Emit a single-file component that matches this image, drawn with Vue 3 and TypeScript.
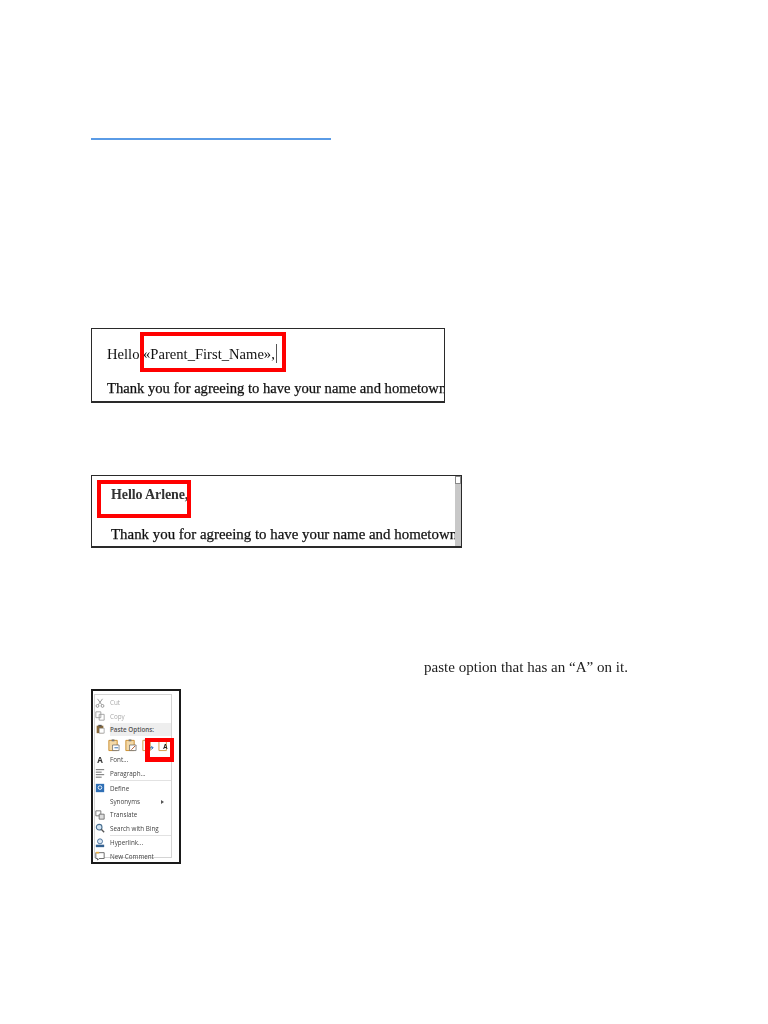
<script setup lang="ts">
interface Item { label: string; kind: string; dim?: boolean; arrow?: boolean }
const topItems: Item[] = [
  { label: 'Cut', kind: 'cut', dim: true },
  { label: 'Copy', kind: 'copy', dim: true },
]
const lowItems: Item[] = [
  { label: 'Define', kind: 'define' },
  { label: 'Synonyms', kind: 'none', arrow: true },
  { label: 'Translate', kind: 'translate' },
  { label: 'Search with Bing', kind: 'search' },
]
</script>

<template>
  <main class="page">
    <div class="rule"></div>

    <section class="shot shot-one">
      <p class="hello">Hello «Parent_First_Name»,<span class="caret"></span></p>
      <p class="body">Thank you for agreeing to have your name and hometown</p>
      <p class="body clipped">used on the website and in</p>
      <div class="mark mark-one"></div>
    </section>

    <section class="shot shot-two">
      <p class="hello arlene">Hello Arlene,</p>
      <p class="body">Thank you for agreeing to have your name and hometown</p>
      <p class="body clipped">used on the website and in</p>
      <div class="scroll"><div class="thumb"></div></div>
      <div class="mark mark-two"></div>
    </section>

    <p class="note">paste option that has an “A” on it.</p>

    <section class="menu">
      <div class="list">
        <div v-for="it in topItems" :key="it.label" class="row" :class="{ dim: it.dim }">
          <svg class="ico" viewBox="0 0 12 12">
            <path v-if="it.kind === 'cut'" d="M3 1l5 7M9 1L4 8" stroke="#888" fill="none" />
            <circle v-if="it.kind === 'cut'" cx="3" cy="9.5" r="1.7" stroke="#888" fill="none" />
            <circle v-if="it.kind === 'cut'" cx="9" cy="9.5" r="1.7" stroke="#888" fill="none" />
            <path v-if="it.kind === 'copy'" d="M1 1h6v7H1zM5 4h6v7H5z" stroke="#999" fill="#fff" />
          </svg>
          <span>{{ it.label }}</span>
        </div>

        <div class="row head">
          <svg class="ico" viewBox="0 0 12 12">
            <path d="M2 2h8v9H2z" fill="#8a6a3a" />
            <path d="M4 1h4v2H4z" fill="#555" />
            <path d="M5 5h6v6H5z" fill="#fff" stroke="#666" stroke-width=".6" />
          </svg>
          <span class="head-label">Paste Options:</span>
        </div>

        <div class="pastes">
          <svg class="paste" viewBox="0 0 14 14">
            <path d="M2 2h9v11H2z" fill="#f3d9a8" stroke="#c98a2b" />
            <path d="M5 1h3v2H5z" fill="#777" />
            <path d="M6 7h7v6H6z" fill="#fff" stroke="#555" stroke-width=".7" />
            <path d="M8 10h4" stroke="#2b6cb0" />
          </svg>
          <svg class="paste" viewBox="0 0 14 14">
            <path d="M2 2h9v11H2z" fill="#f3d9a8" stroke="#c98a2b" />
            <path d="M5 1h3v2H5z" fill="#777" />
            <path d="M6 7h7v6H6z" fill="#fff" stroke="#555" stroke-width=".7" />
            <path d="M8 12l4-4" stroke="#b0562b" />
          </svg>
          <svg class="paste" viewBox="0 0 14 14">
            <path d="M2 2h8v11H2z" fill="#fff" stroke="#d19a45" />
            <path d="M4 1h4v2H4z" fill="#777" />
            <path d="M8 10h5M11 8l2 2-2 2" stroke="#2b6cb0" fill="none" />
          </svg>
          <svg class="paste" viewBox="0 0 14 14">
            <path d="M1 2h8v11H1z" fill="#fff" stroke="#d19a45" />
            <path d="M3 1h4v2H3z" fill="#777" />
            <text x="5.5" y="11" class="paste-a">A</text>
          </svg>
        </div>

        <div class="row">
          <span class="ico letter">A</span>
          <span>Font...</span>
        </div>
        <div class="row">
          <svg class="ico" viewBox="0 0 12 12">
            <path d="M1 2h10M1 5h7M1 8h10M1 11h7" stroke="#555" fill="none" />
          </svg>
          <span>Paragraph...</span>
        </div>

        <div class="sep sep-wide"></div>

        <div v-for="it in lowItems" :key="it.label" class="row">
          <svg class="ico" viewBox="0 0 12 12">
            <g v-if="it.kind === 'define'">
              <rect x="1" y="1" width="10" height="10" fill="#2f6fb5" />
              <circle cx="6" cy="5.5" r="2.2" fill="none" stroke="#fff" />
            </g>
            <g v-if="it.kind === 'translate'">
              <path d="M1 1h6v6H1z" fill="#fff" stroke="#666" />
              <path d="M5 5h6v6H5z" fill="#ddd" stroke="#666" />
            </g>
            <g v-if="it.kind === 'search'">
              <circle cx="5" cy="5" r="3.4" fill="#d5e6f5" stroke="#4a6f8f" stroke-width="1.3" />
              <path d="M7.5 7.5l3.5 3.5" stroke="#555" stroke-width="1.6" />
            </g>
          </svg>
          <span class="grow">{{ it.label }}</span>
          <span v-if="it.arrow" class="arrow"></span>
        </div>

        <div class="sep"></div>

        <div class="row">
          <svg class="ico" viewBox="0 0 12 12">
            <circle cx="6" cy="4" r="3" fill="#dbe7f3" stroke="#33608f" />
            <path d="M1 8h10v3H1z" fill="#33608f" />
          </svg>
          <span>Hyperlink...</span>
        </div>
        <div class="row">
          <svg class="ico" viewBox="0 0 12 12">
            <path d="M1 2h10v7H5l-2 2V9H1z" fill="#fff" stroke="#555" />
            <path d="M1 1h4v2H1z" fill="#e8b04a" />
          </svg>
          <span>New Comment</span>
        </div>
      </div>
      <div class="mark mark-three"></div>
    </section>
  </main>
</template>

<style scoped>
.page {
  width: 768px;
  height: 1024px;
  box-sizing: border-box;
  padding: 138px 0 0 91px;
  background: #fff;
  overflow: hidden;
  font-family: "Liberation Serif", "Times New Roman", serif;
  color: #111;
  display: flex;
  flex-direction: column;
  align-items: flex-start;
}
p { margin: 0; white-space: nowrap; }

.rule {
  width: 240px;
  height: 2px;
  background: #5a9be6;
}

.shot {
  position: relative;
  box-sizing: border-box;
  border: 1px solid #2a2a2a;
  border-bottom-width: 2px;
  background: #fff;
  overflow: hidden;
  font-size: 14.6px;
  filter: blur(0.35px);
}
.shot-one {
  width: 354px;
  height: 75px;
  margin-top: 188px;
  padding: 15px 0 0 15px;
}
.shot-two {
  width: 371px;
  height: 73px;
  margin-top: 72px;
  padding: 10px 0 0 19px;
  font-size: 14.9px;
}
.hello { line-height: 18px; margin-bottom: 16px; }
.arlene { font-weight: 700; color: #333; font-size: 14px; letter-spacing: -0.1px; margin-bottom: 21px; }
.body { line-height: 18px; -webkit-text-stroke: 0.25px #111; }
.clipped { margin-top: 0; }
.caret {
  display: inline-block;
  width: 1px;
  height: 19px;
  margin-left: 1px;
  vertical-align: -4px;
  background: #555;
}

.scroll {
  position: absolute;
  top: 0;
  right: 0;
  bottom: 0;
  width: 6px;
  background: #c8c8c8;
}
.thumb {
  height: 8px;
  background: #fff;
  border: 1px solid #888;
  box-sizing: border-box;
}

.mark {
  position: absolute;
  box-sizing: border-box;
  border: 4px solid #f00;
}
.mark-one { left: 48px; top: 3px; width: 146px; height: 40px; }
.mark-two { left: 5px; top: 4px; width: 94px; height: 38px; }
.mark-three { left: 52px; top: 47px; width: 29px; height: 24px; border-width: 4px 4px 5px 5px; }

.note {
  margin: 109px 0 0 333px;
  font-size: 15.05px;
  line-height: 20px;
  color: #222;
  filter: blur(0.3px);
}

.menu {
  position: relative;
  width: 90px;
  height: 175px;
  margin-top: 12px;
  box-sizing: border-box;
  border: 2px solid #1a1a1a;
  padding: 3px 7px 4px 1px;
  background: #fff;
}
.list {
  box-sizing: border-box;
  height: 100%;
  border: 1px solid #d4d4d4;
  padding-top: 1px;
  font-family: "Open Sans", "Liberation Sans", sans-serif;
  font-size: 6.3px;
  color: #444;
  filter: blur(0.45px);
}
.row {
  display: flex;
  align-items: center;
  gap: 5px;
  height: 13.4px;
  padding-left: 0;
}
.dim { color: #aaa; }
.ico {
  flex: none;
  width: 10px;
  height: 10px;
}
.letter {
  font-weight: 700;
  font-size: 8px;
  text-align: center;
  line-height: 10px;
  color: #333;
}
.head { gap: 0; }
.head-label {
  flex: 1;
  align-self: stretch;
  display: flex;
  align-items: center;
  margin-left: 5px;
  background: #eee;
  font-weight: 600;
  color: #555;
}
.pastes {
  display: flex;
  gap: 4px;
  height: 16px;
  margin-top: 1px;
  align-items: center;
  padding-left: 12px;
}
.paste { width: 13px; height: 14px; flex: none; }
.paste-a {
  font-family: "Liberation Sans", sans-serif;
  font-size: 7px;
  font-weight: 700;
  fill: #222;
}
.sep {
  height: 1px;
  margin: 0 0 0 15px;
  background: #e2e2e2;
}
.sep-wide { margin-bottom: 0.5px; }
.grow { flex: 1; }
.arrow {
  width: 0;
  height: 0;
  margin-right: 7px;
  border-left: 3px solid #555;
  border-top: 2px solid transparent;
  border-bottom: 2px solid transparent;
}
</style>
